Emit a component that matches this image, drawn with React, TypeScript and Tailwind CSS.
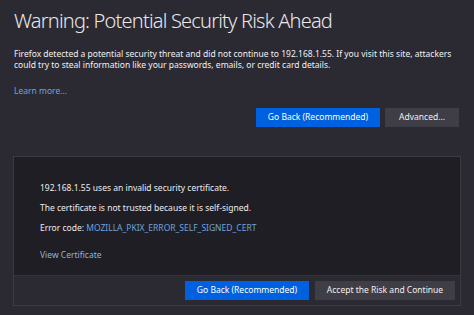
import React from "react";

export default function App() {
  return (
    <div
      className="w-[474px] h-[315px] overflow-hidden bg-[#2b2a33] text-[#fbfbfe]"
      style={{ fontFamily: '"Noto Sans", "Open Sans", sans-serif' }}
    >
      <div className="pl-[14px] pr-[14px] pt-[8px]">
        <h1 className="text-[20px] leading-[26px] font-light text-[#e8e8ea] tracking-[-0.8px]">
          Warning: Potential Security Risk Ahead
        </h1>
        <p className="mt-[14px] text-[8.5px] leading-[11px] text-[#f0f0f2]">
          Firefox detected a potential security threat and did not continue to 192.168.1.55. If you visit this site, attackers could try to steal information like your passwords, emails, or credit card details.
        </p>
        <div className="mt-[15px] text-[8.5px] leading-[11px] text-[#6fa4dc]">Learn more…</div>
        <div className="mt-[12px] flex justify-end gap-[5px] pr-[1px]">
          <button className="h-[19px] w-[124px] bg-[#0061e0] text-[8.5px] text-white">Go Back (Recommended)</button>
          <button className="h-[19px] w-[74px] bg-[#3f3e46] text-[8.5px] text-[#f0f0f2]">Advanced…</button>
        </div>
      </div>
      <div className="mx-[13px] mt-[29px] h-[150px] border border-[#3c3b43] flex flex-col">
        <div className="flex-1 bg-[#1f1e25] pl-[26px] pt-[25px] text-[8.5px] leading-[11px] text-[#ececee]">
          <p>192.168.1.55 uses an invalid security certificate.</p>
          <p className="mt-[9px]">The certificate is not trusted because it is self-signed.</p>
          <p className="mt-[9px]">
            Error code: <span className="text-[#6fa4dc]">MOZILLA_PKIX_ERROR_SELF_SIGNED_CERT</span>
          </p>
          <p className="mt-[16px] text-[#8fb2d8]">View Certificate</p>
        </div>
        <div className="h-[30px] bg-[#2b2a33] border-t border-[#35343c] flex justify-end items-center gap-[6px] pr-[5px]">
          <button className="h-[19px] w-[124px] bg-[#0061e0] text-[8.5px] text-white">Go Back (Recommended)</button>
          <button className="h-[19px] w-[140px] bg-[#3f3e46] text-[8.5px] text-[#f0f0f2]">Accept the Risk and Continue</button>
        </div>
      </div>
    </div>
  );
}
